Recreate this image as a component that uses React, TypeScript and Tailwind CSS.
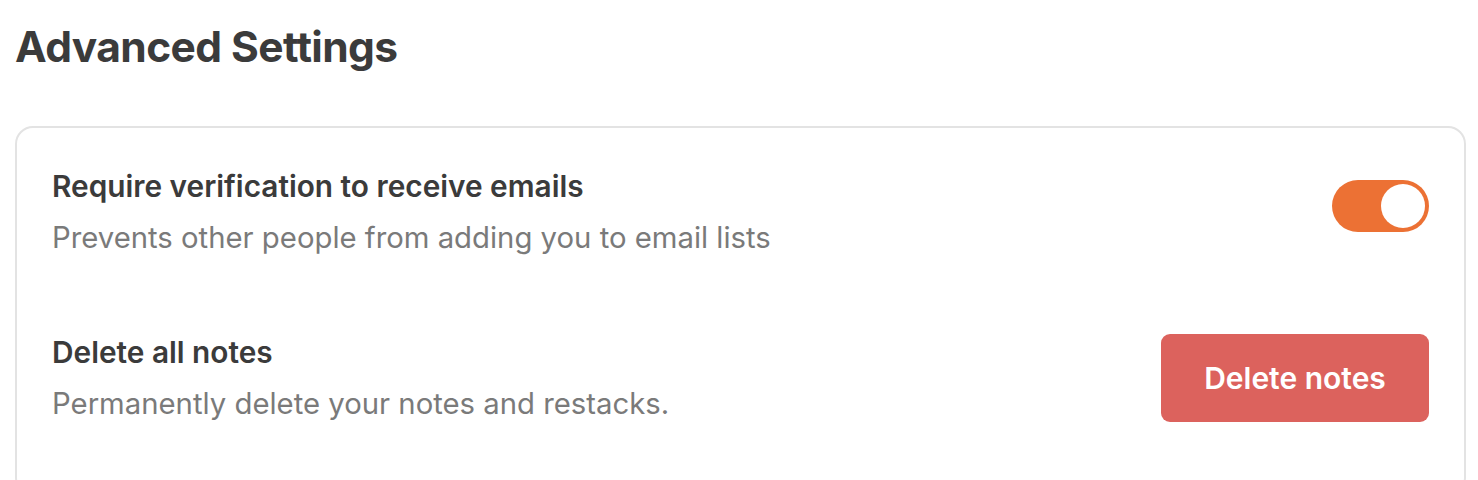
export default function App() {
  return (
    <div className="min-h-screen bg-white pl-[15px] pr-[12px] pt-[17px] font-['Inter',sans-serif] text-[#3b3b3b]">
      <h1 className="text-[42.5px] font-bold leading-[60px] tracking-[-0.6px]">Advanced Settings</h1>

      <div className="mt-[49px] rounded-[18px] border-2 border-[#e3e3e3] px-[35px] pt-[38px] pb-[70px]">
        <div className="flex flex-col gap-[74px]">
          {/* Verification toggle */}
          <div className="flex items-start justify-between">
            <div>
              <div className="text-[29.8px] font-semibold leading-[40px]">Require verification to receive emails</div>
              <div className="mt-[12px] text-[29.3px] leading-[40px] text-[#7a7a7a]">
                Prevents other people from adding you to email lists
              </div>
            </div>
            <button
              role="switch"
              aria-checked="true"
              className="mt-[14px] flex h-[52px] w-[97px] items-center justify-end rounded-full bg-[#ec7134] pr-[4px]"
            >
              <span className="h-[44px] w-[44px] rounded-full bg-white" />
            </button>
          </div>

          {/* Delete notes */}
          <div className="flex items-start justify-between">
            <div>
              <div className="text-[29.8px] font-semibold leading-[40px]">Delete all notes</div>
              <div className="mt-[12px] text-[29.3px] leading-[40px] text-[#7a7a7a]">
                Permanently delete your notes and restacks.
              </div>
            </div>
            <button className="mt-[2px] h-[88px] w-[268px] rounded-[9px] bg-[#dc625d] text-[30px] font-semibold text-white">
              Delete notes
            </button>
          </div>
        </div>
      </div>
    </div>
  );
}
